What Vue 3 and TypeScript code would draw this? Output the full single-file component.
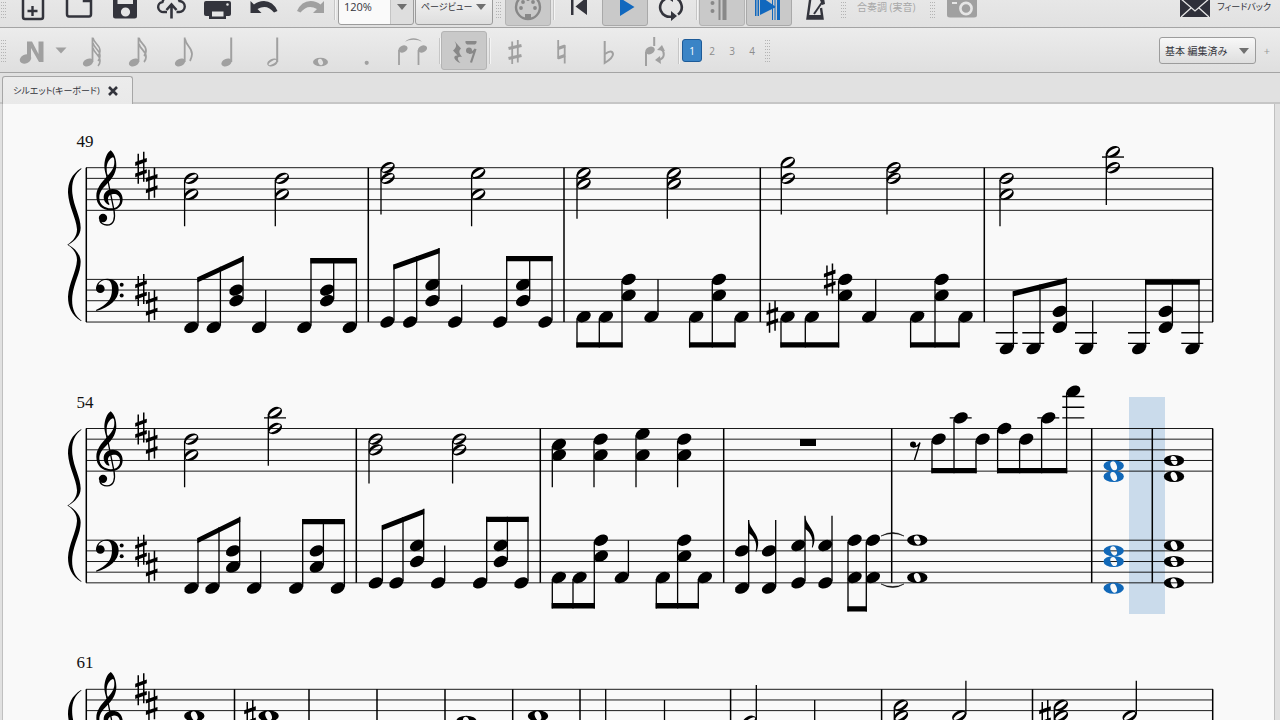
<script setup lang="ts">
import { ref } from 'vue'

/* ---------- toolbar icons ---------- */
interface Layer { d: string; fill: string; stroke: string; w: number }
const f = (d: string, color = 'currentColor'): Layer => ({ d, fill: color, stroke: 'none', w: 0 })
const s = (d: string, w = 2, color = 'currentColor'): Layer => ({ d, fill: 'none', stroke: color, w })
const disc = (x: number, y: number, rx: number, ry = rx, rot = 0): string => {
  const a = (rot * Math.PI) / 180
  const dx = rx * Math.cos(a)
  const dy = rx * Math.sin(a)
  return `M${x - dx} ${y - dy}A${rx} ${ry} ${rot} 1 1 ${x + dx} ${y + dy}A${rx} ${ry} ${rot} 1 1 ${x - dx} ${y - dy}Z`
}
const paper = '#e6e6e6'
const smallFlag = (y: number): string => `M1 ${y}C2 ${y + 6} 8 ${y + 6} 8 ${y + 13}C8 ${y + 15} 7 ${y + 17} 6 ${y + 18}`

const icons: Record<string, Layer[]> = {
  newDoc: [s('M-10 -14V11Q-10 13 -8 13H8Q10 13 10 11V-8L4 -14Z', 2.5), s('M-.5 0V10M-5.5 5H4.5', 2.4)],
  open: [s('M-12 -13V8Q-12 10.500 -10 10.500H10Q12 10.500 12 8V-5H5V-13', 2.5)],
  save: [
    f('M-12 -13H8L12 -9V10Q12 12.500 9.500 12.500H-9.500Q-12 12.500 -12 10ZM-7.500 -10V-2H8V-10Z' + disc(0.5, 6, 4.6)),
  ],
  upload: [s('M-4 6H-7A5 5 0 0 1 -8.500 -4A9 9 0 0 1 8.500 -5A5.500 5.500 0 0 1 8 6H5.500', 2.4), s('M.5 12.500V0M-4.500 4L.5 -1.500L5.500 4', 2.6)],
  print: [
    f('M-9 -14H10V-7H-9Z'),
    f('M-13 -3Q-13 -5 -11 -5H12Q14 -5 14 -3V8Q14 10 12 10H-11Q-13 10 -13 8Z'),
    f('M-8 3H9V13H-8Z'),
    f('M-5 5.500H6.500V10.500H-5Z', paper),
    f(disc(10.5, -1.5, 1.3), paper),
  ],
  undo: [f('M-12.500 -5V7H-1.500L-5.500 3Q4 -2.500 11 6.500L14.500 5Q10 -5 1 -5Q-5 -5 -9 -1.500Z')],
  redo: [f('M15 -5V7H4L8 3Q-1.500 -2.500 -8.500 6.500L-12 5Q-7.500 -5 1.500 -5Q7.500 -5 11.500 -1.500Z')],
  midi: [
    s(disc(0, 1, 12), 2.4),
    f(disc(-7, 2, 1.9) + disc(7, 2, 1.9) + disc(-5, -4, 1.9) + disc(5, -4, 1.9) + disc(0, -7, 1.9) + 'M-3 8H3V13H-3Z'),
  ],
  rewind: [f('M-8 -10H-5.500V9H-8ZM8 -9V9L-3.500 .5Z')],
  play: [f('M-5 -8V10L9.500 1Z', '#1168be')],
  loop: [
    s('M-6 -7A9.500 9.500 0 0 0 1 10.500', 2.6), s('M7 8.500A9.500 9.500 0 0 0 1 -8.500', 2.6),
    f('M0 5V15L6 10ZM2 -4V-14L-4 -8Z'),
  ],
  repeat: [f(disc(-9.5, -3, 2) + disc(-9.5, 5, 2) + 'M-3.500 -14H-1.500V14H-3.500ZM.5 -14H4.500V14H.5Z')],
  follow: [
    f('M-14 -13H-12.500V10H-14ZM-11.500 -13H-10V10H-11.500ZM-9 -10L7 1L-9 9ZM3 -13H4V14H3ZM5.500 -13H6.500V14H5.500ZM8 -13H11V14H8Z', '#1168be'),
  ],
  metronome: [s('M-3.500 -16L-7.500 12.500H7.500L6 2M4 -10L3.500 -16Z', 2.4), s('M-1 8L8 -5', 2), f('M-6 9H6V13H-6ZM5 -6L9 -8L10 -2L7 -1Z')],
  camera: [f('M-15 -14H15V9Q15 11.500 12 11.500H-12Q-15 11.500 -15 9Z'), s(disc(4, 2.5, 5.6), 2.6, paper), f('M-10 -4H-5V-2H-10Z', paper)],
  mail: [f('M-15 -12H15V11H-15Z'), s('M-15 -8L0 5L15 -8M-14 11L-4 2M14 11L4 2', 1.3, paper)],

  noteInput: [f('M-5 -8.500H0L6.500 4V-8.500H11.500V12H7L-1 -2V9H-5Z'), f(disc(-6.5, 9, 6, 4.4, -25))],
  caret: [f('M-6.500 -2.500H4.500L-1 3.500Z')],
  n32: [f(disc(-4, 12.5, 5.4, 3.6, -25)), s('M.5 12V-12.500', 1.8), s(smallFlag(-12) + smallFlag(-7) + smallFlag(-2), 1.6)],
  n16: [f(disc(-4, 12.5, 5.4, 3.6, -25)), s('M.5 12V-12.500', 1.8), s(smallFlag(-12) + smallFlag(-6), 1.8)],
  n8: [f(disc(-4, 12.5, 5.4, 3.6, -25)), s('M.7 12V-12.500', 1.8), s('M1 -11C2 -4 8 -3 8 4C8 7 7 9 6 11', 1.8)],
  n4: [f(disc(-3.5, 12.5, 5.4, 3.6, -25)), s('M1.200 12V-12.500', 2)],
  n2: [f(disc(-3.5, 12.5, 5.6, 3.7, -25) + disc(-3.5, 12.5, 4.4, 1.5, -30)), s('M1.200 12V-12.500', 2)],
  n1: [f(disc(-1.5, 12, 7.5, 4.3) + disc(-1.5, 12, 3.3, 2.3, 65))],
  dot: [f(disc(-1.3, 12.8, 2.1))],
  tie: [f(disc(-11, -1, 4.8, 3.4, -25) + disc(8.5, -1, 4.8, 3.4, -25)), s('M-15 0V15M4.500 0V15', 1.8), f('M-9 -8C-5 -13 4 -13 8 -8C4 -11 -5 -11 -9 -8Z')],
  rests: [
    f('M-9.500 -9L-3 -1.500C-5.500 1 -5 3 -2 7C-7 5.500 -7.500 9 -3.500 13C-10 11 -12 5 -6.500 5.500L-11 .5C-7.500 -2.500 -7 -5 -9.500 -9Z'),
    f('M1.500 -9H12.500V-7L11 -5.500H3L1.500 -7Z' + disc(5, 0.5, 3)),
    s('M5 3Q9 3 11.500 -1L7 12.500', 2.2),
  ],
  sharp: [s('M-2.800 -8.500V14M2.800 -10V12.500', 1.8), s('M-6.500 -1.500L6.500 -4.500M-6.500 8.500L6.500 5.500', 3)],
  natural: [s('M-2.800 -10V9M3.700 -5V13.500', 1.8), s('M-3 -1.500L4 -4M-3 8L4 5.500', 3)],
  flat: [s('M-2.300 -9V13Q6 8 6 4Q5 -1 -2 4', 2)],
  flip: [f(disc(-3, 0.5, 5, 3.6, -25)), s('M-7 2V16M1.200 -13V-4', 2), s('M8 -1C12 2 12 8 6 10', 2), f('M4 0L9 -5L12 1ZM7 6L2 10L8 14Z')],
  close: [s('M-4 -4L4 4M4 -4L-4 4', 2.6)],
}

interface Tool { icon: string; label: string; state?: string }
const fileTools: Tool[] = [
  { icon: 'newDoc', label: '新規' }, { icon: 'open', label: '開く' }, { icon: 'save', label: '保存' },
  { icon: 'upload', label: 'アップロード' }, { icon: 'print', label: '印刷' }, { icon: 'undo', label: '元に戻す' },
  { icon: 'redo', label: 'やり直し', state: 'dim' },
]
const transportTools: Tool[] = [
  { icon: 'rewind', label: '先頭へ' }, { icon: 'play', label: '再生', state: 'on' }, { icon: 'loop', label: 'ループ' },
]
const playTools: Tool[] = [
  { icon: 'repeat', label: '繰り返し', state: 'on dim' }, { icon: 'follow', label: '追従', state: 'on next' },
  { icon: 'metronome', label: 'メトロノーム' },
]
const durationTools: Tool[] = [
  { icon: 'n32', label: '32分音符' }, { icon: 'n16', label: '16分音符' }, { icon: 'n8', label: '8分音符' },
  { icon: 'n4', label: '4分音符' }, { icon: 'n2', label: '2分音符' }, { icon: 'n1', label: '全音符' },
  { icon: 'dot', label: '付点' }, { icon: 'tie', label: 'タイ' },
]
const pitchTools: Tool[] = [
  { icon: 'sharp', label: 'シャープ' }, { icon: 'natural', label: 'ナチュラル' }, { icon: 'flat', label: 'フラット' },
  { icon: 'flip', label: '反転' },
]
const voice = ref(1)

/* ---------- score: vertical positions are half-spaces below a staff's top line ---------- */
const STEP = 5.33
const BASS = 111.7
type Chord = [x: number, steps: number[], end: number]
interface Beam { notes: [number, number[]][]; down?: boolean; from: number; to: number }
interface Staff {
  half?: Chord[]; quarter?: Chord[]; up?: Chord[]; flagged?: Chord[]; halfUp?: Chord[]
  whole?: [number, number[]][]; picked?: [number, number[]][]; beams?: Beam[]; sharps?: [number, number][]
}
interface System { label: string; top: number; bars: number[]; stems?: [number, number][]; treble: Staff; bass: Staff }

const tri = (xs: number[], a: number[], b: number[], c: number[], from: number, to = from, down = false): Beam =>
  ({ notes: [[xs[0], a], [xs[1], b], [xs[2], c]], from, to, down })

const systems: System[] = [
  {
    label: '49', top: 167.7, bars: [368.3, 564, 760.3, 984.3],
    treble: {
      half: [
        [191.3, [2, 5], 11], [282, [2, 5], 11], [387.7, [0, 2], 8.8], [478.3, [1, 5], 11], [583.7, [1, 3], 9.6],
        [674, [1, 3], 9.6], [788, [-1, 2], 8.8], [893.7, [0, 2], 8.8], [1006.7, [2, 5], 11], [1113, [-3, 0], 7],
      ],
    },
    bass: {
      up: [[259, [9], 2], [455, [8], 1], [651.3, [7], 0], [869, [7], 0], [1086, [13], 4]],
      beams: [
        tri([191.3, 213.7, 236.3], [9], [9], [2, 4], -0.4, -4.4), tri([304.3, 327, 349.7], [9], [2, 4], [9], -4),
        tri([387.3, 410, 432.3], [8], [8], [1, 4], -2.8, -5.9), tri([500, 523, 545.3], [8], [1, 4], [8], -4.4),
        tri([583.7, 606, 628.7], [7], [7], [0, 3], 12.8, 12.8, true), tri([696.3, 719, 741.7], [7], [0, 3], [7], 12.8, 12.8, true),
        tri([787.7, 812, 845.3], [7], [7], [0, 3], 12.8, 12.8, true), tri([917.3, 941.7, 965.7], [7], [0, 3], [7], 12.8, 12.8, true),
        tri([1006.7, 1033.3, 1059.7], [13], [13], [6, 9], 2.2, -0.3), tri([1139, 1165.7, 1192.3], [13], [6, 9], [13], 0),
      ],
      sharps: [[772.3, 7], [829.7, 0]],
    },
  },
  {
    label: '54', top: 428.5, bars: [356.3, 540.3, 723.7, 891.7, 1091.7, 1152.3],
    treble: {
      half: [[191.3, [2, 5], 11], [275, [-3, 0], 7], [375.7, [2, 4], 10.3], [459.3, [2, 4], 10.3]],
      quarter: [[559, [3, 5], 11], [600.7, [2, 5], 11], [642.7, [1, 5], 11], [684.3, [2, 5], 11]],
      beams: [
        tri([938.7, 960.7, 982.7], [2], [-2], [2], 8.4, 8.4, true),
        { notes: [[1004.3, [0]], [1026.3, [2]], [1048.3, [-2]], [1073.3, [-7]]], from: 8.4, to: 8.4, down: true },
      ],
      picked: [[1113.7, [7, 9]]],
      whole: [[1174, [6, 9]]],
    },
    bass: {
      up: [[254, [9], 2], [438, [8], 1], [621.7, [7], 0], [769, [2, 9], -3.8], [825.3, [1, 8], -4.6]],
      flagged: [[742, [2, 9], -3.8], [798.3, [1, 8], -4.6]],
      beams: [
        tri([191.3, 212.3, 233], [9], [9], [2, 5], -0.4, -4.4), tri([296, 316.7, 337.7], [9], [2, 5], [9], -4),
        tri([375.7, 396.3, 417], [8], [8], [1, 4], -2.8, -5.9), tri([480, 500.7, 521.3], [8], [1, 4], [8], -4.4),
        tri([559, 579.7, 601], [7], [7], [0, 3], 12.8, 12.8, true), tri([663, 684.3, 705], [7], [0, 3], [7], 12.8, 12.8, true),
        { notes: [[854.7, [0, 7]], [873, [0, 7]]], from: 13.4, to: 13.4, down: true },
      ],
      picked: [[1113.7, [2, 4, 9]]],
      whole: [[917.3, [0, 7]], [1174, [1, 4, 8]]],
    },
  },
  {
    label: '61', top: 689.3, bars: [234.5, 309, 377, 445, 512.7, 580, 730.6, 881.6, 1032.5],
    stems: [[605.7, 0], [664.5, 2], [814.7, 2]],
    treble: {
      half: [[901, [3, 5], 12], [1061, [3, 5], 12]],
      halfUp: [[749.6, [6], -0.8], [959.2, [5], -1.6], [1129.6, [5], -1.6]],
      whole: [[194.3, [5]], [268.6, [5]], [466.4, [6]], [538, [5]]],
      sharps: [[250, 5], [1045, 5]],
    },
    bass: {},
  },
]

const HEAD = disc(0, 0, 7.5, 5.1, -27)
const HALF = HEAD + disc(0, 0, 6.5, 2.2, -33)
const WHOLE = disc(0, 0, 10.2, 5.6) + disc(0, 0, 4.7, 3, 68)
const FLAG = 'M0 0C1 9 9.500 13 9.500 23C9.500 27 8.500 30 7.500 32L6.800 31.500C9 24 6 17 0 13Z'

interface Mark { d: string; x: number; y: number; picked: boolean }
function engrave(st: Staff) {
  const marks: Mark[] = []
  const lines: string[] = []
  const beams: string[] = []
  const ledgers: string[] = []
  const put = (d: string, x: number, steps: number[], picked = false) => {
    for (const n of steps) {
      marks.push({ d, x, y: n * STEP, picked })
      for (let l = -2; l >= n; l -= 2) ledgers.push(`M${x - 11} ${l * STEP}h22`)
      for (let l = 10; l <= n; l += 2) ledgers.push(`M${x - 11} ${l * STEP}h22`)
    }
  }
  const stem = (x: number, steps: number[], end: number, down: boolean) => {
    const from = down ? Math.min(...steps) : Math.max(...steps)
    lines.push(`M${x + (down ? -6.7 : 6.7)} ${from * STEP + (down ? 1.5 : -1.5)}V${end * STEP}`)
  }
  const chords = (list: Chord[] | undefined, head: string, down: boolean) =>
    list?.forEach(([x, steps, end]) => { put(head, x, steps); stem(x, steps, end, down) })
  chords(st.half, HALF, true)
  chords(st.halfUp, HALF, false)
  chords(st.quarter, HEAD, true)
  chords(st.up, HEAD, false)
  chords(st.flagged, HEAD, false)
  st.flagged?.forEach(([x, , end]) => marks.push({ d: FLAG, x: x + 6.7, y: end * STEP, picked: false }))
  st.whole?.forEach(([x, steps]) => put(WHOLE, x, steps))
  st.picked?.forEach(([x, steps]) => put(WHOLE, x, steps, true))
  st.beams?.forEach(b => {
    const side = b.down ? -6.7 : 6.7
    const x0 = b.notes[0][0] + side
    const x1 = b.notes[b.notes.length - 1][0] + side
    for (const [x, steps] of b.notes) {
      put(HEAD, x, steps)
      stem(x, steps, b.from + ((b.to - b.from) * (x + side - x0)) / (x1 - x0), !!b.down)
    }
    const t = b.down ? -5.3 : 5.3
    beams.push(`M${x0 - 0.6} ${b.from * STEP}L${x1 + 0.6} ${b.to * STEP}v${t}L${x0 - 0.6} ${b.from * STEP + t}Z`)
  })
  return { marks, lines: lines.join(''), beams: beams.join(''), ledgers: ledgers.join(''), sharps: st.sharps ?? [] }
}

const staffLines = [0, 2, 4, 6, 8].map(n => `M86 ${n * STEP}H1213`).join('')
const rows = systems.map(sys => ({
  ...sys,
  staves: [{ y: 0, key: 0, ...engrave(sys.treble) }, { y: BASS, key: 2, ...engrave(sys.bass) }],
  barPath: [86.3, ...sys.bars, 1212.7].map(x => `M${x} 0V${BASS + 8 * STEP}`).join(''),
  stemPath: (sys.stems ?? []).map(([x, n]) => `M${x} ${n * STEP}V${8 * STEP}`).join(''),
}))

const SHARP = 'M-3.500 -14h1.500v30h-1.500ZM2 -16h1.500v30h-1.500ZM-5.800 -5.600L5.800 -9.800V-6L-5.800 -1.800ZM-5.800 5.800L5.800 1.600V5.400L-5.800 9.600Z'
const BRACE = 'M65 3C42 20 34 44 37 77C41 117 62 147 62 180C62 202 45 220 25 231C45 242 62 260 62 282C62 315 41 345 37 385C34 418 42 442 65 459L63 460C35 442 24 417 24 387C26 347 49 312 51 277C51 257 40 242 22 231C40 220 51 205 51 185C49 150 26 117 24 75C24 44 35 20 63 2Z'
const TREBLE = 'M152 -52C163 -44 170 -24 169 -4C167 22 153 36 140 50C126 64 118 75 118 90C118 110 133 121 153 122C172 122 181 110 180 96C179 84 170 78 160 79C149 80 144 87 144 94C144 102 147 107 149 110L146 112C136 108 131 99 131 89C131 75 142 64 158 64C176 64 188 78 188 95C188 114 174 128 152 128C126 128 109 111 109 85C109 63 122 47 142 25C153 13 163 2 163 -16C163 -25 162 -30 159 -31C149 -28 140 -15 140 2C140 11 141 17 143 24L140 27C136 17 133 6 133 -6C134 -26 140 -44 152 -52Z'
const TREBLE_TAIL = 'M140 20L162 128C166 150 163 172 141 172C131 172 123 168 119 158'
const BASS_CLEF = 'M109 29C107 11 122 -2 142 -2C164 -2 176 11 176 31C176 61 148 83 109 95L108 92C140 75 156 61 156 30C156 12 151 2 139 2C127 2 117 8 115 18Z'
</script>

<template>
  <div class="app">
    <div class="toolbar main-bar">
      <i class="grip first"></i>
      <button v-for="t in fileTools" :key="t.icon" class="tool" :class="t.state" :aria-label="t.label">
        <svg viewBox="-22 -18 44 37"><path v-for="(l, i) in icons[t.icon]" :key="i" :d="l.d" :fill="l.fill" :stroke="l.stroke" :stroke-width="l.w" fill-rule="evenodd" /></svg>
      </button>
      <i class="sep wide"></i>
      <span class="combo zoom">
        <select aria-label="ズーム"><option>120%</option></select>
        <svg viewBox="0 0 10 6"><path d="M0 0H10L5 6Z" /></svg>
      </span>
      <span class="combo view">
        <select aria-label="表示"><option>ページビュー</option></select>
        <svg viewBox="0 0 10 6"><path d="M0 0H10L5 6Z" /></svg>
      </span>
      <i class="grip"></i>
      <button class="tool on dim" aria-label="MIDI">
        <svg viewBox="-22 -18 44 37"><path v-for="(l, i) in icons.midi" :key="i" :d="l.d" :fill="l.fill" :stroke="l.stroke" :stroke-width="l.w" /></svg>
      </button>
      <i class="sep"></i>
      <button v-for="t in transportTools" :key="t.icon" class="tool" :class="t.state" :aria-label="t.label">
        <svg viewBox="-22 -18 44 37"><path v-for="(l, i) in icons[t.icon]" :key="i" :d="l.d" :fill="l.fill" :stroke="l.stroke" :stroke-width="l.w" /></svg>
      </button>
      <i class="sep"></i>
      <button v-for="t in playTools" :key="t.icon" class="tool" :class="t.state" :aria-label="t.label">
        <svg viewBox="-22 -18 44 37"><path v-for="(l, i) in icons[t.icon]" :key="i" :d="l.d" :fill="l.fill" :stroke="l.stroke" :stroke-width="l.w" /></svg>
      </button>
      <i class="grip"></i>
      <button class="concert" disabled>合奏調 (実音)</button>
      <i class="grip"></i>
      <button class="tool dim" aria-label="画像キャプチャ">
        <svg viewBox="-22 -18 44 37"><path v-for="(l, i) in icons.camera" :key="i" :d="l.d" :fill="l.fill" :stroke="l.stroke" :stroke-width="l.w" /></svg>
      </button>
      <button class="feedback">
        <span class="mail"><svg viewBox="-22 -18 44 37"><path v-for="(l, i) in icons.mail" :key="i" :d="l.d" :fill="l.fill" :stroke="l.stroke" :stroke-width="l.w" /></svg></span>
        フィードバック
      </button>
    </div>

    <div class="toolbar note-bar">
      <i class="grip first"></i>
      <button class="tool dim" aria-label="音符入力">
        <svg viewBox="-22 -18 44 37"><path v-for="(l, i) in icons.noteInput" :key="i" :d="l.d" :fill="l.fill" /></svg>
      </button>
      <button class="tool dim caret" aria-label="入力モード">
        <svg viewBox="-22 -18 44 37"><path :d="icons.caret[0].d" fill="currentColor" /></svg>
      </button>
      <button v-for="t in durationTools" :key="t.icon" class="tool dim" :aria-label="t.label">
        <svg viewBox="-22 -18 44 37"><path v-for="(l, i) in icons[t.icon]" :key="i" :d="l.d" :fill="l.fill" :stroke="l.stroke" :stroke-width="l.w" fill-rule="evenodd" /></svg>
      </button>
      <i class="sep thin"></i>
      <button class="tool on dim" aria-label="休符">
        <svg viewBox="-22 -18 44 37"><path v-for="(l, i) in icons.rests" :key="i" :d="l.d" :fill="l.fill" :stroke="l.stroke" :stroke-width="l.w" /></svg>
      </button>
      <i class="sep"></i>
      <button v-for="t in pitchTools" :key="t.icon" class="tool dim" :aria-label="t.label">
        <svg viewBox="-22 -18 44 37"><path v-for="(l, i) in icons[t.icon]" :key="i" :d="l.d" :fill="l.fill" :stroke="l.stroke" :stroke-width="l.w" /></svg>
      </button>
      <i class="sep wide"></i>
      <button v-for="v in 4" :key="v" class="voice" :class="{ current: voice === v }" @click="voice = v">{{ v }}</button>
      <i class="grip"></i>
      <span class="combo workspace">
        <select aria-label="ワークスペース"><option>基本 編集済み</option></select>
        <svg viewBox="0 0 10 6"><path d="M0 0H10L5 6Z" /></svg>
      </span>
      <button class="add" aria-label="ワークスペースを追加">+</button>
    </div>

    <div class="tabs">
      <div class="tab">
        <span>シルエット(キーボード)</span>
        <button class="close" aria-label="閉じる"><svg viewBox="-6 -6 12 12"><path :d="icons.close[0].d" fill="none" stroke="currentColor" stroke-width="2.6" /></svg></button>
      </div>
    </div>

    <main class="canvas">
      <svg class="score" viewBox="3 104 1271 616">
        <rect class="cursor" x="1129" y="397" width="36" height="217" />
        <g v-for="row in rows" :key="row.label" :transform="`translate(0 ${row.top})`">
          <text class="number" x="76.500" y="-21">{{ row.label }}</text>
          <path class="ink" :d="BRACE" transform="translate(60 0) scale(.3333)" />
          <path class="bar" :d="row.barPath" />
          <path class="stem" :d="row.stemPath" />
          <g transform="translate(60 0) scale(.3333)">
            <path class="ink" :d="TREBLE" />
            <path class="tail" :d="TREBLE_TAIL" />
            <circle class="ink" cx="129" cy="151" r="12.500" />
            <g :transform="`translate(0 ${BASS * 3})`">
              <path class="ink" :d="BASS_CLEF" />
              <circle class="ink" cx="121" cy="28" r="13" />
              <circle class="ink" cx="185" cy="16" r="6" />
              <circle class="ink" cx="185" cy="48" r="6" />
            </g>
          </g>
          <g v-for="st in row.staves" :key="st.y" :transform="`translate(0 ${st.y})`">
            <path class="staff" :d="staffLines" />
            <path class="ink" :d="SHARP" :transform="`translate(141 ${st.key * STEP})`" />
            <path class="ink" :d="SHARP" :transform="`translate(151.700 ${(st.key + 3) * STEP})`" />
            <path v-for="(sh, i) in st.sharps" :key="'s' + i" class="ink" :d="SHARP" :transform="`translate(${sh[0]} ${sh[1] * STEP})`" />
            <path class="ledger" :d="st.ledgers" />
            <path class="stem" :d="st.lines" />
            <path class="ink" :d="st.beams" />
            <path v-for="(m, i) in st.marks" :key="i" class="ink" :class="{ picked: m.picked }" :d="m.d" fill-rule="evenodd" :transform="`translate(${m.x} ${m.y})`" />
          </g>
        </g>
        <rect class="ink" x="800" y="439" width="16" height="7" />
        <circle class="ink" cx="913" cy="444.500" r="3" />
        <path class="rest" d="M913 447Q918 447 920 442.500L914.500 460" />
        <path class="slur" d="M881 536Q893 529 904 536Q893 531 881 536ZM881 584Q893 591 904 584Q893 589 881 584Z" />
      </svg>
    </main>
  </div>
</template>

<style>
html, body { margin: 0; background: #e0e0e0; overflow: hidden; }
</style>

<style scoped>
.app {
  display: flex;
  flex-direction: column;
  height: 100vh;
  overflow: hidden;
  background: #e1e1e1;
  color: #33343c;
  font: 11px/16px "Open Sans", "Noto Sans CJK JP", sans-serif;
  font-feature-settings: "palt";
}
.app * { box-sizing: border-box; }
button, select { font: inherit; font-feature-settings: inherit; color: inherit; margin: 0; padding: 0; background: none; border: 0; }
.toolbar {
  flex: none;
  display: flex;
  align-items: center;
  border-bottom: 1px solid #a4a4a4;
  background: linear-gradient(#ececec, #dfdfdf);
}
.main-bar { height: 42px; margin-top: -14px; background: linear-gradient(#eaeaea, #e1e1e1); }
.note-bar { height: 45px; padding-top: 1px; }
.tool {
  flex: none;
  width: 46px;
  height: 39px;
  display: grid;
  place-content: center;
  border: 1px solid transparent;
  border-radius: 3px;
}
.tool svg, .mail svg { width: 44px; height: 37px; overflow: visible; display: block; }
.tool.dim { color: #a0a0a0; }
.tool.on { background: #c9c9c9; border-color: #a9a9a9; }
.tool.on.dim { color: #888; border-color: #b4b4b4; }
.tool.next { margin-left: 1px; }
.tool.caret { width: 14px; }
.grip {
  flex: none;
  width: 12px;
  height: 22px;
  background: linear-gradient(90deg, #b4b4b4 1px, transparent 1px 2px, #b4b4b4 2px 3px, transparent 3px 4px, #b4b4b4 4px 5px, transparent 5px) 3px 0 / 9px 100% no-repeat;
  -webkit-mask: repeating-linear-gradient(#000 0 1px, transparent 1px 3px);
  mask: repeating-linear-gradient(#000 0 1px, transparent 1px 3px);
}
.grip.first { width: 9px; background-position-x: 1px; }
.main-bar .grip.first { width: 10px; }
.sep { flex: none; width: 5px; height: 26px; background: linear-gradient(90deg, transparent 2px, #c6c6c6 2px 3px, #f4f4f4 3px 4px, transparent 4px); }
.sep.thin { width: 4px; }
.sep.wide { width: 6px; }
.combo { flex: none; position: relative; display: block; }
.combo select {
  display: block;
  width: 100%;
  height: 100%;
  appearance: none;
  border: 1px solid #9c9c9c;
  border-radius: 3px;
  background: linear-gradient(#f8f8f8, #dedede);
  padding-left: 5px;
}
.combo svg { position: absolute; right: 7px; top: 50%; margin-top: -3px; width: 10px; height: 6px; fill: #707070; pointer-events: none; }
.zoom { width: 76px; height: 36px; margin-right: 1px; }
.zoom select { background: linear-gradient(90deg, #fafafa 51px, #c4c4c4 51px 52px, #dedede 52px); }
.view { width: 78px; height: 36px; }
.view select, .feedback { font-size: 9px; }
.workspace { width: 97px; height: 27px; margin-left: auto; }
.workspace select { font-size: 10px; }
.concert { margin-left: 7px; width: 70px; color: #a8a8a8; font-size: 10px; text-align: left; white-space: nowrap; }
.feedback { display: flex; align-items: center; margin-left: auto; padding-right: 9px; white-space: nowrap; }
.mail { width: 44px; color: #2f303a; }
.voice { flex: none; width: 20px; height: 23px; border-radius: 3px; color: #8c8c8c; font-size: 10px; }
.voice.current { background: #3a84c6; border: 1px solid #1d5b98; color: #fff; }
.add { flex: none; width: 22px; margin-right: 2px; color: #999; }
.tabs { flex: none; height: 31px; display: flex; align-items: flex-end; padding-left: 2px; border-bottom: 2px solid #c6c6c6; }
.tab {
  display: flex;
  align-items: center;
  gap: 7px;
  height: 28px;
  margin-bottom: -2px;
  padding: 0 13px 0 10px;
  border: 1px solid #a6a6a6;
  border-bottom: 0;
  border-radius: 3px 3px 0 0;
  background: linear-gradient(#ececec, #e9e9e9);
  font-size: 9px;
}
.close { width: 12px; height: 12px; }
.close svg { display: block; width: 12px; height: 12px; }
.canvas { flex: 1; min-height: 0; overflow: hidden; margin: 0 5px 0 2px; border: solid #c0c0c0; border-width: 0 1px; background: #f9f9f9; }
.score { display: block; width: 100%; }
.ink { fill: #000; }
.ink.picked { fill: #1168b8; }
.cursor { fill: #cadbeb; }
.number { font: 17px "Liberation Serif", serif; fill: #111; }
.staff, .bar, .stem, .ledger, .tail, .rest { fill: none; stroke: #000; }
.slur { fill: #000; stroke: #000; stroke-width: .5; }
.staff { stroke-width: .9; }
.bar { stroke-width: 1.5; }
.stem { stroke-width: 1.3; }
.ledger { stroke-width: 1.4; }
.tail { stroke-width: 4; }
.rest { stroke-width: 1.4; }
</style>
